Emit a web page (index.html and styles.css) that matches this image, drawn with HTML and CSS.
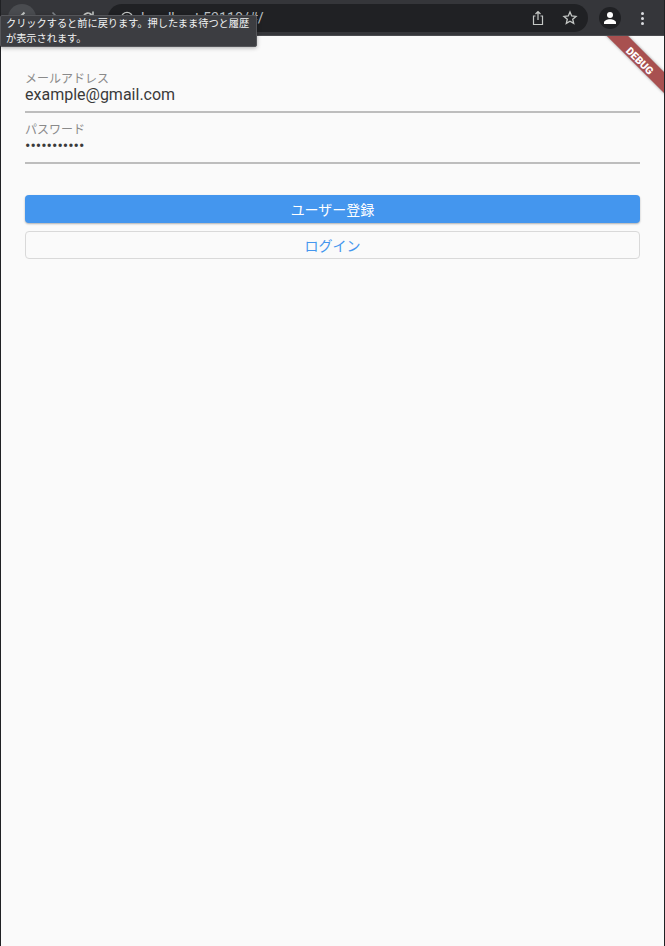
FILE: index.html
```html
<!DOCTYPE html>
<html lang="ja">
<head>
  <meta charset="UTF-8">
  <title>ユーザー登録</title>
  <link rel="stylesheet" href="styles.css">
</head>
<body>
  <div id="window">
    <div class="toolbar">
      <div class="nav-btn back">
        <svg width="16" height="16" viewBox="0 0 16 16"><path d="M10.5 2.5 5 8l5.500 5.500" fill="none" stroke="#c4c7c5" stroke-width="2"/></svg>
      </div>
      <div class="nav-btn">
        <svg width="16" height="16" viewBox="0 0 16 16"><path d="M5.500 2.500 11 8l-5.500 5.500" fill="none" stroke="#80868b" stroke-width="1.600"/></svg>
      </div>
      <div class="nav-btn">
        <svg width="16" height="16" viewBox="0 0 16 16"><path d="M13 8a5 5 0 1 1-1.500-3.500M13 1.500V5H9.500" fill="none" stroke="#c4c7c5" stroke-width="1.600"/></svg>
      </div>
      <div class="omnibox">
        <svg width="14" height="14" viewBox="0 0 14 14"><circle cx="7" cy="7" r="5.700" fill="none" stroke="#c4c7c5" stroke-width="1.200"/><path d="M7 6.200v4M7 3.800v1.200" stroke="#c4c7c5" stroke-width="1.200"/></svg>
        <span class="url">localhost:53110/#/</span>
        <div class="omni-icons">
          <svg width="16" height="16" viewBox="0 0 16 16"><path d="M5.500 6H3.500v8.500h9V6h-2M8 10V1.500M5.500 4 8 1.500 10.500 4" fill="none" stroke="#c4c7c5" stroke-width="1.200"/></svg>
          <svg width="16" height="16" viewBox="0 0 16 16"><path d="m8 2 1.700 4 4.300.4-3.300 2.800 1 4.200L8 11.200 4.300 13.400l1-4.200L2 6.400 6.300 6z" fill="none" stroke="#c4c7c5" stroke-width="1.300"/></svg>
        </div>
      </div>
      <div class="avatar">
        <svg width="14" height="14" viewBox="0 0 14 14"><circle cx="7" cy="4" r="3" fill="#fff"/><path d="M1 13v-1.500C1 9.500 4 8.200 7 8.200s6 1.300 6 3.300V13z" fill="#fff"/></svg>
      </div>
      <div class="menu-dots"><i></i><i></i><i></i></div>
    </div>

    <div class="tooltip">クリックすると前に戻ります。押したまま待つと履歴が表示されます。</div>

    <div class="page">
      <div class="banner"><span>DEBUG</span></div>
      <form class="form">
        <div class="field">
          <label class="field-label">メールアドレス</label>
          <div class="field-value">example@gmail.com</div>
        </div>
        <div class="field">
          <label class="field-label">パスワード</label>
          <div class="field-value dots">•••••••••••</div>
        </div>
        <button type="button" class="btn-primary">ユーザー登録</button>
        <button type="button" class="btn-outline">ログイン</button>
      </form>
    </div>
  </div>
</body>
</html>
```
FILE: styles.css
```css
html, body {
  margin: 0;
  padding: 0;
  height: 100%;
}

body {
  font-family: Roboto, "Noto Sans CJK JP", sans-serif;
  background-color: #fafafa;
  overflow: hidden;
}

#window {
  position: relative;
  display: flex;
  flex-direction: column;
  height: 946px;
  box-sizing: border-box;
  border-left: 1px solid #202124;
  border-right: 1px solid #202124;
}

.toolbar {
  display: flex;
  align-items: center;
  height: 36px;
  flex-shrink: 0;
  box-sizing: border-box;
  padding: 1px 6px 0 7px;
  background-color: #35363a;
  border-bottom: 1px solid #4a4b4f;
}

.nav-btn {
  display: flex;
  align-items: center;
  justify-content: center;
  width: 28px;
  height: 28px;
  margin-right: 5px;
  border-radius: 50%;
}

.nav-btn.back {
  background-color: #4a4c50;
}

.omnibox {
  display: flex;
  align-items: center;
  flex-grow: 1;
  height: 28px;
  margin-left: 1px;
  padding-left: 12px;
  background-color: #202124;
  border-radius: 14px;
}

.url {
  margin-left: 7px;
  font-size: 14.3px;
  color: #bdc1c6;
}

.omni-icons {
  display: flex;
  gap: 16px;
  margin-left: auto;
  padding-right: 10px;
}

.avatar {
  display: flex;
  align-items: center;
  justify-content: center;
  width: 22px;
  height: 22px;
  margin-left: 11px;
  background-color: #202124;
  border-radius: 50%;
}

.menu-dots {
  display: flex;
  flex-direction: column;
  gap: 2px;
  margin-left: 20px;
  margin-right: 14px;
}

.menu-dots i {
  display: block;
  width: 3px;
  height: 3px;
  background-color: #dadce0;
  border-radius: 50%;
}

.tooltip {
  position: absolute;
  top: 15px;
  left: -1px;
  box-sizing: border-box;
  width: 257px;
  height: 32px;
  padding: 1px 5px;
  font-size: 10.2px;
  line-height: 14.5px;
  color: #f1f3f4;
  background-color: #3c3d41;
  border: 1px solid #55565a;
  border-radius: 2px;
  box-shadow: 0 1px 4px rgba(0, 0, 0, 0.3);
}

.page {
  position: relative;
  flex-grow: 1;
  overflow: hidden;
}

.form {
  display: flex;
  flex-direction: column;
  padding: 35px 24px 0;
}

.field {
  height: 40px;
  margin-bottom: 9px;
  border-bottom: 2px solid #bdbdbd;
}

.field-label {
  display: block;
  height: 14px;
  font-size: 12px;
  line-height: 16px;
  color: #8a8a8a;
}

.field-value {
  font-size: 16px;
  line-height: 20px;
  color: #3a3a3a;
}

.btn-primary {
  height: 28px;
  margin-top: 22px;
  padding: 0;
  font-family: inherit;
  font-size: 14px;
  color: #fff;
  background-color: #4496ee;
  border: none;
  border-radius: 4px;
  box-shadow: 0 1px 2px rgba(0, 0, 0, 0.3);
}

.btn-outline {
  height: 28px;
  margin-top: 8px;
  padding: 0;
  font-family: inherit;
  font-size: 14px;
  color: #4496ee;
  background-color: transparent;
  border: 1px solid #d9d9d9;
  border-radius: 4px;
}

.banner {
  position: absolute;
  top: 16px;
  right: -37px;
  width: 120px;
  height: 15px;
  line-height: 15px;
  text-align: center;
  background-color: #a85050;
  transform: rotate(45deg);
  box-shadow: 0 0 3px rgba(0, 0, 0, 0.4);
}

.banner span {
  font-size: 10.5px;
  font-weight: 900;
  color: #fff;
}
```
